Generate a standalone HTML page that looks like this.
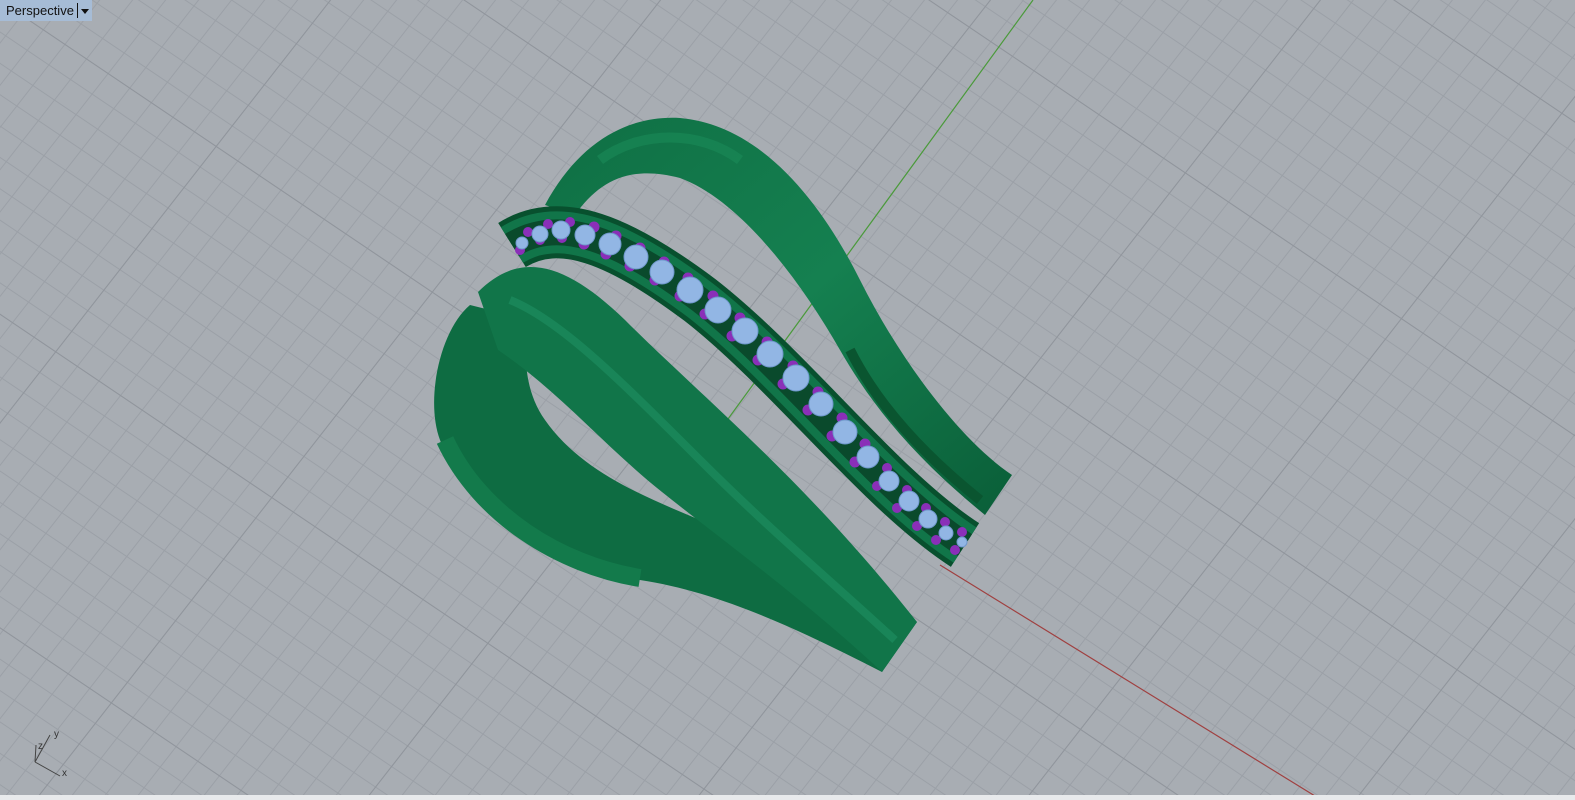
<!DOCTYPE html>
<html><head><meta charset="utf-8"><style>
html,body{margin:0;padding:0;width:1575px;height:800px;overflow:hidden;background:#a8adb3}
.lbl{position:absolute;left:0;top:0;height:21px;background:#a6bcd6;font:13px "Liberation Sans",sans-serif;color:#111;padding:0 0 0 6px;line-height:21px;width:86px}
.lbl span{position:absolute;left:77px;top:3px;border-left:1px solid #111;height:15px;width:10px}
.lbl span:after{content:"";position:absolute;left:3px;top:6px;border:4px solid transparent;border-top:5px solid #111}
</style></head><body>
<svg width="1575" height="800" style="position:absolute;left:0;top:0">
<defs>
<pattern id="a" width="26" height="26" patternUnits="userSpaceOnUse" patternTransform="rotate(34)"><path d="M0 0.5H26" stroke="#9ba0a7" stroke-width="1.1"/></pattern>
<pattern id="b" width="26" height="26" patternUnits="userSpaceOnUse" patternTransform="rotate(-52)"><path d="M0 0.5H26" stroke="#9ba0a7" stroke-width="1.1"/></pattern>
<pattern id="A" width="260" height="260" patternUnits="userSpaceOnUse" patternTransform="rotate(34)"><path d="M0 0.5H260" stroke="#90959c" stroke-width="1.1"/></pattern>
<pattern id="B" width="260" height="260" patternUnits="userSpaceOnUse" patternTransform="rotate(-52)"><path d="M0 0.5H260" stroke="#90959c" stroke-width="1.1"/></pattern>
<linearGradient id="gr" x1="0" y1="0" x2="1" y2="1"><stop offset="0" stop-color="#0f6f44"/><stop offset="0.5" stop-color="#158050"/><stop offset="1" stop-color="#0a5e38"/></linearGradient>
</defs>
<rect width="1575" height="800" fill="#a8adb3"/>
<rect width="1575" height="800" fill="url(#a)"/>
<rect width="1575" height="800" fill="url(#b)"/>
<rect width="1575" height="800" fill="url(#A)"/>
<rect width="1575" height="800" fill="url(#B)"/>
<line x1="1033" y1="0" x2="720" y2="430" stroke="#4a9a3a" stroke-width="1.2"/>
<line x1="940" y1="565" x2="1315" y2="796" stroke="#a04040" stroke-width="1.2"/>
<path d="M545,205 C580,140 630,115 680,118 C760,125 820,200 860,280 C900,360 960,440 1012,475 L985,515 C930,470 880,420 840,350 C800,280 740,200 680,178 C630,165 600,180 575,215 Z" fill="url(#gr)"/>
<path d="M600,160 C640,130 700,130 740,160" stroke="#1a8a58" stroke-width="10" fill="none" opacity="0.6"/>
<path d="M980,500 C930,460 880,410 850,350" stroke="#0a5530" stroke-width="10" fill="none"/>
<path d="M470,305 C440,330 425,400 440,440 C470,520 560,570 640,580 C720,592 800,630 882,672 L917,622 C850,590 760,545 700,520 C640,495 580,470 545,420 C520,385 525,340 530,320 Z" fill="#0e6c42"/>
<path d="M445,440 C480,515 560,565 640,578" stroke="#137a4b" stroke-width="18" fill="none"/>
<path d="M478,292 C520,250 565,262 625,320 C705,400 805,480 917,622 L882,672 C805,600 722,540 662,492 C602,444 560,392 498,350 Z" fill="#117549"/>
<path d="M510,300 C560,320 620,380 700,460 C770,530 830,580 895,640" stroke="#1f9062" stroke-width="8" fill="none" opacity="0.6"/>
<path d="M512,245 C560,215 620,240 700,300 C790,370 880,490 965,545" stroke="#08502e" stroke-width="52" fill="none"/>
<path d="M512,245 C560,215 620,240 700,300 C790,370 880,490 965,545" stroke="#117549" stroke-width="42" fill="none"/>
<path d="M512,245 C560,215 620,240 700,300 C790,370 880,490 965,545" stroke="#0a4a2c" stroke-width="26" fill="none"/>
<g fill="#8a2fb8">
<circle cx="528" cy="232" r="5"/><circle cx="548" cy="224" r="5"/><circle cx="570" cy="222" r="5"/><circle cx="594" cy="227" r="5.5"/><circle cx="616" cy="236" r="5.5"/><circle cx="640" cy="248" r="5.5"/><circle cx="664" cy="262" r="5.5"/><circle cx="688" cy="278" r="5.5"/><circle cx="713" cy="296" r="5.5"/><circle cx="740" cy="318" r="5.5"/><circle cx="767" cy="342" r="5.5"/><circle cx="793" cy="366" r="5.5"/><circle cx="818" cy="392" r="5.5"/><circle cx="842" cy="418" r="5.5"/><circle cx="865" cy="444" r="5.5"/><circle cx="887" cy="468" r="5"/><circle cx="907" cy="490" r="5"/><circle cx="926" cy="508" r="5"/><circle cx="945" cy="522" r="5"/><circle cx="962" cy="532" r="5"/>
<circle cx="520" cy="250" r="5"/><circle cx="540" cy="240" r="5"/><circle cx="562" cy="238" r="5"/><circle cx="584" cy="244" r="5.5"/><circle cx="606" cy="254" r="5.5"/><circle cx="630" cy="266" r="5.5"/><circle cx="655" cy="280" r="5.5"/><circle cx="680" cy="296" r="5.5"/><circle cx="705" cy="314" r="5.5"/><circle cx="732" cy="336" r="5.5"/><circle cx="758" cy="360" r="5.5"/><circle cx="783" cy="384" r="5.5"/><circle cx="808" cy="410" r="5.5"/><circle cx="832" cy="436" r="5.5"/><circle cx="855" cy="462" r="5.5"/><circle cx="877" cy="486" r="5"/><circle cx="897" cy="508" r="5"/><circle cx="917" cy="526" r="5"/><circle cx="936" cy="540" r="5"/><circle cx="955" cy="550" r="5"/>
</g>
<g fill="#92b6e4" stroke="#7098cc" stroke-width="1">
<circle cx="522" cy="243" r="6"/><circle cx="540" cy="234" r="8"/><circle cx="561" cy="230" r="9"/><circle cx="585" cy="235" r="10"/><circle cx="610" cy="244" r="11"/><circle cx="636" cy="257" r="12"/><circle cx="662" cy="272" r="12"/><circle cx="690" cy="290" r="13"/><circle cx="718" cy="310" r="13"/><circle cx="745" cy="331" r="13"/><circle cx="770" cy="354" r="13"/><circle cx="796" cy="378" r="13"/><circle cx="821" cy="404" r="12"/><circle cx="845" cy="432" r="12"/><circle cx="868" cy="457" r="11"/><circle cx="889" cy="481" r="10"/><circle cx="909" cy="501" r="10"/><circle cx="928" cy="519" r="9"/><circle cx="946" cy="533" r="7"/><circle cx="962" cy="542" r="5"/>
</g>
<g stroke="#444" stroke-width="1" fill="none"><path d="M35,762 L60,776 M35,762 L50,735 M35,762 L36,745"/></g>
<text x="38" y="749" font-family="Liberation Sans" font-size="10" fill="#333">z</text>
<text x="54" y="737" font-family="Liberation Sans" font-size="10" fill="#333">y</text>
<text x="62" y="776" font-family="Liberation Sans" font-size="10" fill="#333">x</text>
<rect x="0" y="795" width="1575" height="5" fill="#e8eaec"/>
</svg>
<div class="lbl">Perspective<span></span></div>
</body></html>
